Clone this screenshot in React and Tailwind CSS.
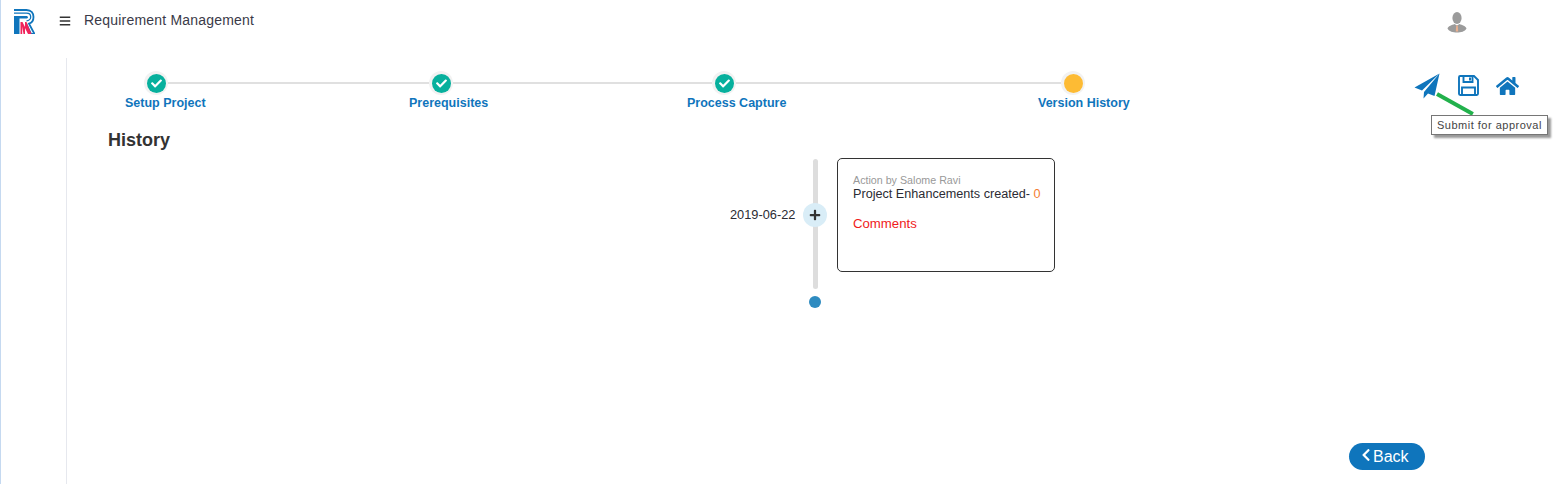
import React from "react";
import { FaCheck, FaHome, FaPlus, FaChevronLeft, FaBars } from "react-icons/fa";

const steps = [
  { label: "Setup Project", w: "w-[285px]", offset: "-ml-[19px]", done: true, line: true },
  { label: "Prerequisites", w: "w-[283px]", offset: "-ml-[20px]", done: true, line: true },
  { label: "Process Capture", w: "w-[349px]", offset: "-ml-[25px]", done: true, line: true },
  { label: "Version History", w: "w-[120px]", offset: "-ml-[23px]", done: false, line: false },
];

function Logo() {
  return (
    <svg width="21" height="25" viewBox="0 0 21 25" fill="none">
      <path d="M0 1H12.5C17.5 1 19.5 4.5 19.5 8C19.5 11.5 17.5 14 15 14.6L20.5 25H17L12 14.5" stroke="#0f75bc" strokeWidth="1.8" />
      <path d="M0 4.2H12.5C15.5 4.2 16.7 6 16.7 8C16.7 10 15 11.8 12.5 11.8" stroke="#0f75bc" strokeWidth="1.3" />
      <path d="M0 7H12C13.4 7 14 7.6 14 8.3C14 9 13.2 9.6 12 9.6H5.5V25H0Z" fill="#0f75bc" />
      <path d="M6.5 25V13H8.5L11 18V13H12.5L17.5 25H14L11 19V25H9.5L8.2 17.5V25Z" fill="#f0245c" />
    </svg>
  );
}

function UserIcon() {
  return (
    <svg width="20" height="22" viewBox="0 0 20 22">
      <ellipse cx="10" cy="7" rx="4.6" ry="6" fill="#9b9b9b" />
      <path d="M0.5 17.5C1 15 5 14 7.5 13L10 14.5L12.5 13C15 14 19 15 19.5 17.5C18 20.5 14 21.5 10 21.5C6 21.5 2 20.5 0.5 17.5Z" fill="#9b9b9b" />
      <path d="M9.2 14.5H10.8L11.2 20.5H8.8Z" fill="#eab08f" />
    </svg>
  );
}

function SendIcon() {
  return (
    <svg width="26" height="26" viewBox="0 0 26 26">
      <path d="M25.5 0.5L0.5 14.5L8 17.5L25.5 0.5L10 19L9.5 25.5L14 20.5L20.5 23Z" fill="#0f75bc" />
    </svg>
  );
}

function SaveIcon() {
  return (
    <svg width="21" height="21" viewBox="0 0 21 21" fill="none" stroke="#0f75bc" strokeWidth="1.9">
      <path d="M2.2 1H16L20 5V18.8C20 19.6 19.6 20 18.8 20H2.2C1.4 20 1 19.6 1 18.8V2.2C1 1.4 1.4 1 2.2 1Z" />
      <path d="M5.5 1V7H14.5V1" />
      <path d="M12 2.5V5.5" strokeWidth="2" />
      <path d="M4 20V12.5H17V20" />
    </svg>
  );
}

function Step({ s }) {
  return (
    <div className={`${s.w} flex flex-col items-start`}>
      <div className="flex w-full items-center">
        <div className="flex h-6 w-6 shrink-0 items-center justify-center rounded-full bg-[#f2f2f2]">
          {s.done ? (
            <div className="flex h-[19px] w-[19px] items-center justify-center rounded-full bg-[#07b09d]">
              <FaCheck className="h-[11px] w-[11px] text-white" />
            </div>
          ) : (
            <div className="h-[19px] w-[19px] rounded-full bg-[#fdbb34]" />
          )}
        </div>
        {s.line && <div className="h-0.5 flex-1 bg-[#e0e0e0]" />}
      </div>
      <div className={`${s.offset} text-[12.5px] leading-[16px] font-bold whitespace-nowrap text-[#0f75bc]`}>{s.label}</div>
    </div>
  );
}

export default function App() {
  return (
    <div className="relative flex h-[484px] w-[1565px] flex-col overflow-hidden border-l border-[#c5d9f0] bg-white font-['Liberation_Sans',Arial,sans-serif] text-[#333]">
      <header className="flex h-[58px] items-start">
        <div className="mt-[9px] ml-[13px]"><Logo /></div>
        <FaBars className="mt-[15px] ml-[24px] h-[12px] w-[12px] text-[#333]" />
        <div className="mt-[11px] ml-[13px] text-[14px] leading-[18px] tracking-[0.2px] text-[#3a3a48]">Requirement Management</div>
        <div className="mt-[11px] ml-[1193px]"><UserIcon /></div>
      </header>

      <main className="ml-[65px] flex flex-1 flex-col border-l border-[#e6e8ee]">
        <div className="flex items-start">
          <div className="mt-[13px] ml-[77px] flex">
            {steps.map((s) => <Step key={s.label} s={s} />)}
          </div>
          <div className="mt-[15px] ml-[233px] flex items-start">
            <SendIcon />
            <div className="mt-[2px] ml-[18px]"><SaveIcon /></div>
            <FaHome className="mt-[2px] ml-[17px] h-[22px] w-[23px] text-[#0f75bc]" />
          </div>
        </div>

        <h2 className="mt-[18px] ml-[41px] text-[18px] leading-[22px] font-bold text-[#333]">History</h2>

        <div className="mt-[8px] ml-[663px] flex items-start">
          <div className="mt-[48px] w-[66px] text-[12.8px] leading-[16px] text-[#2b2b33]">2019-06-22</div>
          <div className="relative ml-[7px] flex w-6 flex-col items-center">
            <div className="h-[130px] w-[5px] rounded bg-[#dddddd]" />
            <div className="absolute top-[44px] left-0 flex h-6 w-6 items-center justify-center rounded-full bg-[#d9edf7]">
              <FaPlus className="h-[12px] w-[12px] text-[#333]" />
            </div>
            <div className="mt-[7px] h-3 w-3 rounded-full bg-[#2e8bc0]" />
          </div>
          <div className="-mt-px ml-[10px] h-[114px] w-[218px] rounded-[5px] border border-[#333] bg-white px-[15px] pt-[15px]">
            <div className="text-[10.7px] leading-[12px] text-[#999]">Action by Salome Ravi</div>
            <div className="text-[12.65px] leading-[16px] whitespace-nowrap text-[#2b2b33]">Project Enhancements created- <span className="text-[#f47c30]">0</span></div>
            <div className="mt-[14px] text-[13.2px] leading-[16px] text-[#f01a1a]">Comments</div>
          </div>
        </div>

        <div className="mt-auto mb-[14px] ml-[1282px]">
          <button className="flex h-[27px] w-[76px] items-center justify-start rounded-[14px] bg-[#0f75bc] pl-[10px] text-[16px] text-white">
            <FaChevronLeft className="mb-[3px] h-[14px] w-[14px]" />Back
          </button>
        </div>
      </main>

      <div className="absolute top-[92px] left-[1436px] h-1 w-[41px] origin-left rotate-[29deg] bg-[#22b14c]" />
      <div className="absolute top-[115px] left-[1430px] border border-[#767676] bg-white px-[5px] text-[11px] leading-[18px] tracking-[0.5px] whitespace-nowrap text-[#444] shadow-[3px_3px_2px_#999]">Submit for approval</div>
    </div>
  );
}
